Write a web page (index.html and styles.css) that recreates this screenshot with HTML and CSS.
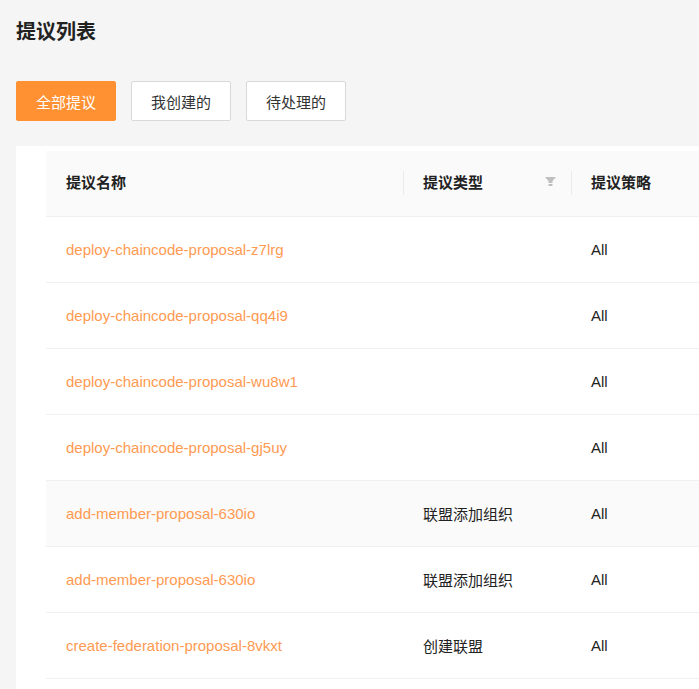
FILE: index.html
```html
<!DOCTYPE html>
<html lang="zh-CN">
<head>
<meta charset="utf-8">
<link rel="stylesheet" href="styles.css">
</head>
<body>
<div class="page">
  <h1 class="title">提议列表</h1>
  <div class="tabs">
    <button class="tab active">全部提议</button>
    <button class="tab">我创建的</button>
    <button class="tab">待处理的</button>
  </div>
  <div class="card">
    <table class="table">
      <colgroup>
        <col class="c1"><col class="c2"><col class="c3">
      </colgroup>
      <thead>
        <tr>
          <th>提议名称</th>
          <th class="sep"><div class="th-inner"><span>提议类型</span>
            <svg class="filter" width="11" height="10" viewBox="0 0 11 10"><path d="M0 0H11L7.5 4H3.5Z" fill="#bfbfbf"/><rect x="3.5" y="4" width="4" height="2" fill="#bfbfbf"/><rect x="3.5" y="7" width="4" height="2" fill="#bfbfbf"/></svg></div></th>
          <th class="sep">提议策略</th>
        </tr>
      </thead>
      <tbody>
        <tr><td><a class="link">deploy-chaincode-proposal-z7lrg</a></td><td></td><td>All</td></tr>
        <tr><td><a class="link">deploy-chaincode-proposal-qq4i9</a></td><td></td><td>All</td></tr>
        <tr><td><a class="link">deploy-chaincode-proposal-wu8w1</a></td><td></td><td>All</td></tr>
        <tr><td><a class="link">deploy-chaincode-proposal-gj5uy</a></td><td></td><td>All</td></tr>
        <tr class="hover"><td><a class="link">add-member-proposal-630io</a></td><td>联盟添加组织</td><td>All</td></tr>
        <tr><td><a class="link">add-member-proposal-630io</a></td><td>联盟添加组织</td><td>All</td></tr>
        <tr><td><a class="link">create-federation-proposal-8vkxt</a></td><td>创建联盟</td><td>All</td></tr>
        <tr><td><a class="link">create-federation-proposal-8vkxt</a></td><td>创建联盟</td><td>All</td></tr>
      </tbody>
    </table>
  </div>
</div>
</body>
</html>
```
FILE: styles.css
```css
html, body {
  margin: 0;
  padding: 0;
  background: #f5f5f5;
  overflow: hidden;
  height: 689px;
}
body {
  font-family: "Liberation Sans", "Noto Sans CJK SC", sans-serif;
  font-size: 15px;
  color: rgba(0, 0, 0, 0.85);
}
.page {
  padding: 18px 0 0 16px;
}
.title {
  margin: 0;
  font-size: 20px;
  line-height: 28px;
  font-weight: 700;
  color: #222;
}
.tabs {
  display: flex;
  gap: 15px;
  margin-top: 35px;
}
.tab {
  width: 100px;
  height: 40px;
  padding: 0;
  border: 1px solid #d9d9d9;
  border-radius: 2px;
  background: #fff;
  font-family: inherit;
  font-size: 15px;
  color: #333;
}
.tab.active {
  background: #ff9133;
  border-color: #ff9133;
  color: #fff;
}
.card {
  margin-top: 25px;
  background: #fff;
  padding: 5px 0 0 30px;
  width: 900px;
}
.table {
  border-collapse: collapse;
  table-layout: fixed;
  width: 870px;
}
.c1 { width: 357px; }
.c2 { width: 168px; }
.table th {
  background: #fafafa;
  height: 61px;
  padding: 0 20px 4px;
  text-align: left;
  font-weight: 700;
  color: #222;
  border-bottom: 1px solid #f0f0f0;
  position: relative;
}
.table th.sep::before {
  content: "";
  position: absolute;
  left: 0;
  top: 20px;
  width: 1px;
  height: 24px;
  background: #ececec;
}
.th-inner {
  display: flex;
  align-items: center;
  justify-content: space-between;
}
.filter {
  margin-right: -5px;
}
.table td {
  height: 65px;
  padding: 0 20px;
  border-bottom: 1px solid #f0f0f0;
  color: #222;
}
.table tr.hover td {
  background: #fafafa;
}
.link {
  color: #ff9a52;
  text-decoration: none;
}
```
